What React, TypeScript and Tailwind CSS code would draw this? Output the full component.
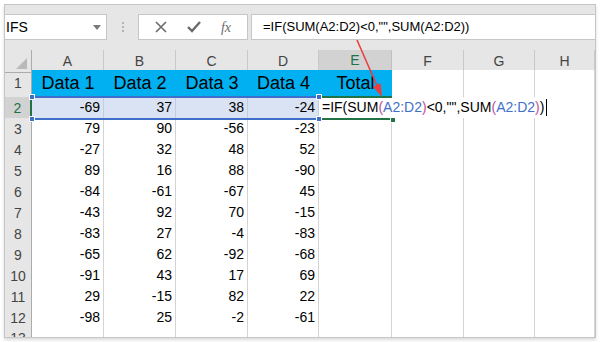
import React from 'react';

const font = { fontFamily: '"Liberation Sans", Arial, sans-serif' };

const data = [
  [-69, 37, 38, -24],
  [79, 90, -56, -23],
  [-27, 32, 48, 52],
  [89, 16, 88, -90],
  [-84, -61, -67, 45],
  [-43, 92, 70, -15],
  [-83, 27, -4, -83],
  [-65, 62, -92, -68],
  [-91, 43, 17, 69],
  [29, -15, 82, 22],
  [-98, 25, -2, -61],
];

const cols = ['A', 'B', 'C', 'D', 'E', 'F', 'G', 'H'];
const gridCls = 'grid grid-cols-[27px_72px_72px_72px_71px_73px_72px_71px_60px]';

function RowHead({ n, active }: { n: number | string; active?: boolean }) {
  return (
    <div
      className={
        active
          ? 'flex items-center justify-center bg-[#d2d2d2] border-r-2 border-r-[#217346] border-b border-b-[#c0c0c0] text-[14px] text-[#217346]'
          : 'flex items-center justify-center bg-[#e6e6e6] border-r border-r-[#ababab] border-b border-b-[#c8c8c8] text-[14px] text-[#444]'
      }
    >
      {n}
    </div>
  );
}

function NumCell({ v, hl }: { v: number; hl?: boolean }) {
  return (
    <div
      className={`flex items-end justify-end pr-[3px] pb-[1px] text-[14px] text-black border-r border-b ${
        hl ? 'bg-[#dae3f3] border-[#c5cddd]' : 'bg-white border-[#d4d4d4]'
      }`}
    >
      {v}
    </div>
  );
}

function Empty() {
  return <div className="bg-white border-r border-b border-[#d4d4d4]" />;
}

function Formula() {
  const pink = 'text-[#c0509a]';
  const blue = 'text-[#3f70c9]';
  return (
    <span className="whitespace-nowrap text-black">
      =IF(SUM<span className={pink}>(</span>
      <span className={blue}>A2:D2</span>
      <span className={pink}>)</span>&lt;0,"",SUM<span className={pink}>(</span>
      <span className={blue}>A2:D2</span>
      <span className={pink}>)</span>)
    </span>
  );
}

function Handle({ cls }: { cls: string }) {
  return <div className={`absolute w-[6px] h-[6px] bg-[#3f70c9] border border-white ${cls}`} />;
}

export default function App() {
  return (
    <div className="relative w-[600px] h-[342px] bg-white pl-[4px] pt-[4px] overflow-hidden" style={font}>
      <div className="w-[592px] h-[334px] border border-[#c6c6c6] bg-[#e6e6e6] flex flex-col overflow-hidden shadow-[0_2px_3px_rgba(0,0,0,0.15)]">
        {/* formula bar */}
        <div className="h-[45px] shrink-0 flex items-start pt-[9px]">
          <div className="w-[102px] h-[26px] bg-white border border-l-0 border-[#c6c6c6] flex items-center justify-between pr-[5px]">
            <span className="text-[14px] text-black pl-[1px]">IFS</span>
            <svg width="8" height="5" viewBox="0 0 8 5">
              <path d="M0 0 L8 0 L4 5 Z" fill="#7a7a7a" />
            </svg>
          </div>
          <div className="w-[31px] h-[26px] flex flex-col items-center justify-center gap-[2px]">
            <div className="w-[2px] h-[2px] bg-[#b4b4b4]" />
            <div className="w-[2px] h-[2px] bg-[#b4b4b4]" />
            <div className="w-[2px] h-[2px] bg-[#b4b4b4]" />
          </div>
          <div className="w-[110px] h-[26px] bg-white border border-[#c6c6c6] flex items-center justify-around px-[6px]">
            <svg width="12" height="12" viewBox="0 0 12 12">
              <path d="M1 1 L11 11 M11 1 L1 11" stroke="#6b6b6b" strokeWidth="1.6" />
            </svg>
            <svg width="14" height="12" viewBox="0 0 14 12">
              <path d="M1 6 L5 10 L13 1" stroke="#6b6b6b" strokeWidth="2.4" fill="none" />
            </svg>
            <span className="text-[14px] italic text-[#6b6b6b]" style={{ fontFamily: '"Liberation Serif", serif' }}>
              fx
            </span>
          </div>
          <div className="ml-[3px] flex-1 h-[26px] bg-white border border-r-0 border-[#c6c6c6] flex items-center pl-[11px] text-[13px] text-black whitespace-nowrap">
            =IF(SUM(A2:D2)&lt;0,"",SUM(A2:D2))
          </div>
        </div>

        {/* sheet */}
        <div className="relative flex-1 overflow-hidden">
          <div className={`${gridCls} h-[20px]`}>
            <div className="relative bg-[#e6e6e6] border-r border-b border-[#ababab]">
              <svg className="absolute right-[4px] bottom-[3px]" width="11" height="11" viewBox="0 0 11 11">
                <path d="M11 0 L11 11 L0 11 Z" fill="#b9b9b9" />
              </svg>
            </div>
            {cols.map((c) =>
              c === 'E' ? (
                <div
                  key={c}
                  className="flex items-center justify-center bg-[#d2d2d2] border-r border-r-[#c0c0c0] border-b-2 border-b-[#217346] text-[14px] text-[#217346]"
                >
                  {c}
                </div>
              ) : (
                <div
                  key={c}
                  className="flex items-center justify-center bg-[#e6e6e6] border-r border-r-[#c8c8c8] border-b border-b-[#ababab] text-[14px] text-[#444]"
                >
                  {c}
                </div>
              )
            )}
          </div>

          {/* row 1 */}
          <div className={`${gridCls} h-[27px]`}>
            <RowHead n={1} />
            {['Data 1', 'Data 2', 'Data 3', 'Data 4', 'Total'].map((t) => (
              <div key={t} className="flex items-end justify-center pb-[1px] bg-[#00b0f0] text-[18px] text-black">
                {t}
              </div>
            ))}
            <Empty />
            <Empty />
            <Empty />
          </div>

          {/* row 2 */}
          <div className={`${gridCls} h-[21px]`}>
            <RowHead n={2} active />
            {data[0].map((v, i) => (
              <NumCell key={i} v={v} hl />
            ))}
            <div className="relative bg-white border-b border-[#d4d4d4] z-10">
              <div className="absolute left-[3px] bottom-[1px] text-[14px] flex items-center">
                <Formula />
                <div className="w-[1px] h-[17px] bg-black ml-[2px]" />
              </div>
            </div>
            <div className="bg-white border-b border-[#d4d4d4]" />
            <div className="bg-white border-b border-[#d4d4d4]" />
            <Empty />
          </div>

          {data.slice(1).map((row, r) => (
            <div key={r} className={`${gridCls} h-[21px]`}>
              <RowHead n={r + 3} />
              {row.map((v, i) => (
                <NumCell key={i} v={v} />
              ))}
              <Empty />
              <Empty />
              <Empty />
              <Empty />
            </div>
          ))}
          <div className={`${gridCls} h-[21px]`}>
            <RowHead n={13} />
            {cols.map((c) => (
              <Empty key={c} />
            ))}
          </div>

          {/* range selection A2:D2 */}
          <div className="absolute left-[27px] top-[46px] w-[287px] h-[24px] border-y-2 border-[#3f70c9] z-20" />
          <Handle cls="left-[24px] top-[44px] z-30" />
          <Handle cls="left-[24px] top-[66px] z-30" />
          <Handle cls="left-[311px] top-[44px] z-30" />
          <Handle cls="left-[311px] top-[66px] z-30" />
          {/* active cell E2 */}
          <div className="absolute left-[316px] top-[46px] w-[71px] h-[2px] bg-[#217346] z-20" />
          <div className="absolute left-[316px] top-[68px] w-[69px] h-[2px] bg-[#217346] z-20" />
          <div className="absolute left-[385px] top-[67px] w-[6px] h-[6px] bg-[#217346] border border-white z-30" />
        </div>
      </div>

      {/* red arrow */}
      <svg className="absolute left-0 top-0 pointer-events-none" width="600" height="342" viewBox="0 0 600 342">
        <line x1="357" y1="40" x2="378" y2="88" stroke="#ee3b3b" strokeWidth="1.6" />
        <path d="M382 97 L380.6 83.2 L373 86.7 Z" fill="#ee3b3b" />
      </svg>
    </div>
  );
}
